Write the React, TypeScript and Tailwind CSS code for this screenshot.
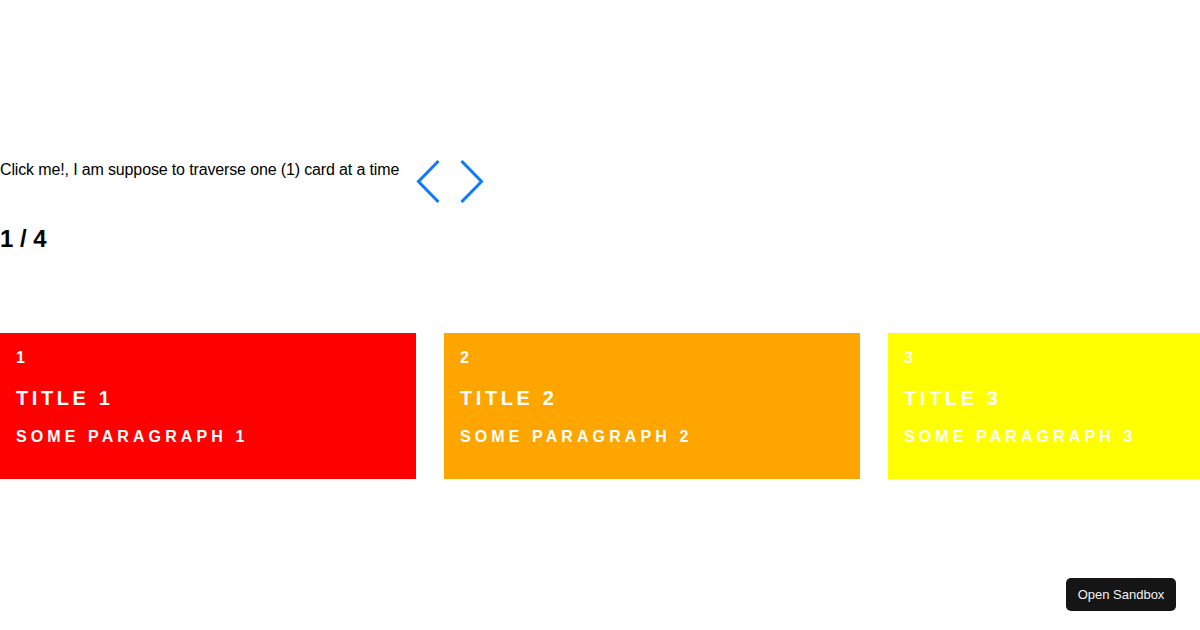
import React from "react";

const cards = [
  { n: 1, bg: "bg-[#ff0000]" },
  { n: 2, bg: "bg-[#ffa500]" },
  { n: 3, bg: "bg-[#ffff00]" },
  { n: 4, bg: "bg-[#008000]" },
];

export default function App() {
  return (
    <div className="w-[1200px] h-[630px] overflow-hidden bg-white text-black font-['Liberation_Sans',Arial,sans-serif] relative">
      <div className="pt-[158px]">
        <div className="flex items-start">
          <span className="text-[16px] leading-6 tracking-[-0.14px] whitespace-nowrap">Click me!, I am suppose to traverse one (1) card at a time</span>
          <button className="ml-[15px] w-[30px] h-[46px]">
            <svg width="30" height="46" viewBox="0 0 30 46" fill="none">
              <path d="M24.5 3 L4.5 23.5 L24.5 44" stroke="#0a7aff" strokeWidth="3" />
            </svg>
          </button>
          <button className="ml-[12px] w-[30px] h-[46px]">
            <svg width="30" height="46" viewBox="0 0 30 46" fill="none">
              <path d="M5.5 3 L25.5 23.5 L5.5 44" stroke="#0a7aff" strokeWidth="3" />
            </svg>
          </button>
        </div>
        <h2 className="mt-[17px] text-[24px] leading-[36px] font-bold">1 / 4</h2>
        <div className="mt-[76px] flex gap-[28px] overflow-hidden">
          {cards.map((c) => (
            <div key={c.n} className={`${c.bg} w-[416px] h-[146px] shrink-0 px-4 pt-[13px] text-white font-bold`}>
              <div className="text-[16px] leading-6">{c.n}</div>
              <div className="mt-[14px] text-[20px] leading-7 tracking-[3.6px] whitespace-nowrap">TITLE {c.n}</div>
              <div className="mt-[13px] text-[16px] leading-6 tracking-[4.1px] whitespace-nowrap">SOME PARAGRAPH {c.n}</div>
            </div>
          ))}
        </div>
      </div>
      <button className="absolute right-[24px] bottom-[19px] w-[110px] h-[33px] rounded-[5px] bg-[#151515] text-[#f2f2f2] text-[13px] font-['Liberation_Sans',Arial,sans-serif]">
        Open Sandbox
      </button>
    </div>
  );
}
